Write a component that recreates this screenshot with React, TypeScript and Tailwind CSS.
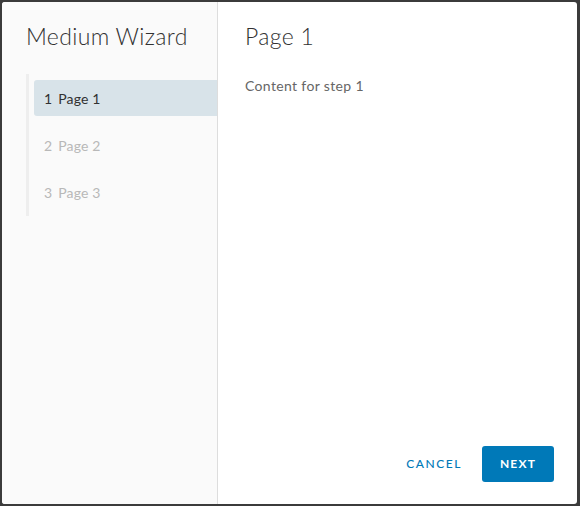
export default function App() {
  const steps = ['Page 1', 'Page 2', 'Page 3'];
  const current = 0;

  return (
    <div className="h-[506px] w-[580px] bg-[#3b3b3b] p-[2px] pr-[3px] font-['Lato',sans-serif]">
      <div className="flex h-[502px] overflow-hidden rounded-[3px] bg-white">
        {/* step nav */}
        <div className="flex w-[216px] shrink-0 flex-col border-r border-[#dddddd] bg-[#fafafa] pl-6 pt-[18px]">
          <h2 className="text-[23px] font-light leading-[32px] tracking-[0.015em] text-[#313131]">Medium Wizard</h2>
          <div className="mt-[22px] flex flex-col gap-[11px] border-l-[3px] border-[#eeeeee] py-[6px] pl-[5px]">
            {steps.map((s, i) => (
              <div
                key={s}
                className={`flex h-[36px] items-center gap-[6px] rounded-l-[3px] pl-[10px] text-[14px] tracking-[0.01em] ${
                  i === current ? 'bg-[#d8e3e9] text-[#313131]' : 'text-[#b8b8b8]'
                }`}
              >
                <span>{i + 1}</span>
                <span>{s}</span>
              </div>
            ))}
          </div>
        </div>

        {/* content */}
        <div className="flex flex-1 flex-col pl-[27px] pr-[23px]">
          <h3 className="pt-[18px] text-[23px] font-light leading-[32px] tracking-[0.015em] text-[#313131]">Page 1</h3>
          <p className="mt-[24px] text-[14px] leading-[20px] tracking-[0.025em] text-[#666666]">Content for step 1</p>
          <div className="mt-auto mb-[22px] flex items-center justify-end gap-[20px]">
            <button className="h-[36px] px-0 text-[12px] font-medium tracking-[0.13em] text-[#0079b8]">CANCEL</button>
            <button className="h-[36px] w-[72px] rounded-[3px] bg-[#0079b8] text-[12px] font-bold tracking-[0.1em] text-white">
              NEXT
            </button>
          </div>
        </div>
      </div>
    </div>
  );
}
